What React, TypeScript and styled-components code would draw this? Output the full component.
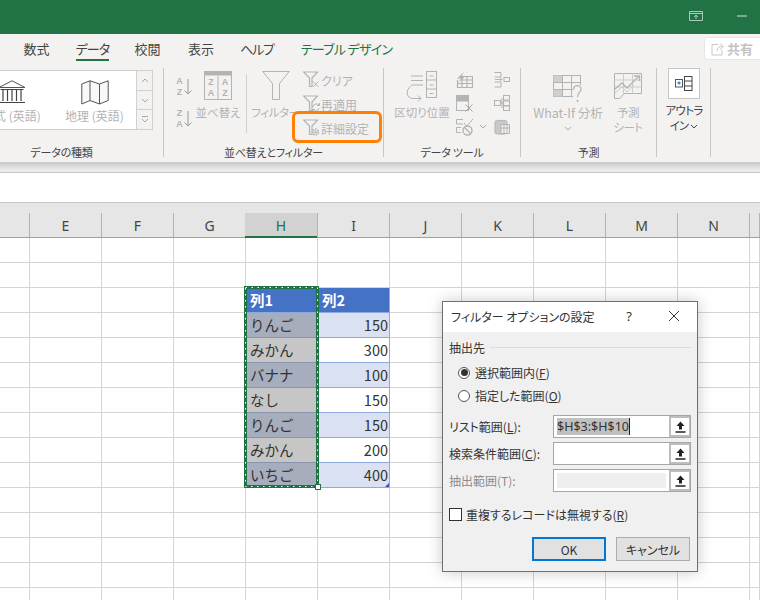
import React from 'react';
import styled, { createGlobalStyle } from 'styled-components';

const FONT = '"Noto Sans CJK JP", "Noto Sans", sans-serif';
const DIM = '#b3b3b3';

const GlobalStyle = createGlobalStyle`
  html, body { margin: 0; padding: 0; }
  body {
    width: 760px;
    height: 600px;
    overflow: hidden;
    background: #fff;
    font-family: ${FONT};
    font-feature-settings: "palt";
    color: #444;
  }
`;

const Page = styled.div`
  position: relative;
  width: 760px;
  height: 600px;
  overflow: hidden;
`;

/* title bar */
const TitleBar = styled.div`
  height: 34px;
  background: #217346;
  display: flex;
  align-items: center;
  justify-content: flex-end;
  gap: 34px;
  padding: 0 13px 2px 0;
  box-sizing: border-box;
`;

/* tabs */
const TabBar = styled.div`
  height: 34px;
  background: #f3f2f1;
  display: flex;
  padding-left: 9px;
  box-sizing: border-box;
`;

const Tab = styled.div<{ $w: number; $active?: boolean; $accent?: boolean; $tight?: number }>`
  position: relative;
  width: ${(p) => p.$w}px;
  text-align: center;
  font-size: 13px;
  line-height: 30px;
  letter-spacing: ${(p) => p.$tight ?? 0}px;
  white-space: nowrap;
  color: ${(p) => (p.$accent ? '#217346' : '#444')};
  &::after {
    content: '';
    display: ${(p) => (p.$active ? 'block' : 'none')};
    position: absolute;
    left: 12px;
    right: 12px;
    top: 25px;
    height: 2px;
    background: #217346;
  }
`;

const ShareButton = styled.div`
  margin: 3px -6px 0 auto;
  width: 62px;
  height: 23px;
  box-sizing: border-box;
  background: #fff;
  border: 1px solid #e6e6e6;
  border-radius: 3px;
  display: flex;
  align-items: center;
  padding-left: 6px;
  gap: 2px;
  font-size: 13px;
  font-weight: 700;
  color: #c4c4c4;
`;

/* ribbon */
const Ribbon = styled.div`
  height: 94px;
  background: #f3f2f1;
  display: flex;
  align-items: flex-start;
`;

const Group = styled.div<{ $w: number; $first?: boolean }>`
  flex: none;
  width: ${(p) => p.$w}px;
  height: 89px;
  box-sizing: border-box;
  border-right: 1px solid #c8c6c4;
  margin-left: ${(p) => (p.$first ? '-40px' : '0')};
`;

const GroupBody = styled.div<{ $pad?: number }>`
  height: 73px;
  display: flex;
  align-items: flex-start;
  padding-left: ${(p) => p.$pad ?? 0}px;
`;

const GroupLabel = styled.div`
  text-align: center;
  font-size: 11px;
  letter-spacing: -0.2px;
  line-height: 22px;
  height: 16px;
  color: #444;
  white-space: nowrap;
`;

const Gallery = styled.div`
  margin: 2px 10px 0 0;
  height: 60px;
  box-sizing: border-box;
  flex: 1;
  display: flex;
  justify-content: flex-end;
  background: #fff;
  border: 1px solid #d2d0ce;
`;

const GalleryItem = styled.div`
  width: 83px;
  display: flex;
  flex-direction: column;
  align-items: center;
  padding-top: 9px;
  box-sizing: border-box;
  font-size: 12px;
  line-height: 22px;
  color: ${DIM};
  white-space: nowrap;
`;

const GalleryScroll = styled.div`
  width: 15px;
  display: flex;
  flex-direction: column;
  background: #f3f2f1;
  border-left: 1px solid #d2d0ce;
`;

const ScrollStep = styled.div`
  flex: 1;
  display: flex;
  align-items: center;
  justify-content: center;
  & + & { border-top: 1px solid #d2d0ce; }
`;

const SortColumn = styled.div`
  width: 21px;
  display: flex;
  flex-direction: column;
  gap: 12px;
  padding-top: 8px;
`;

const BigButton = styled.div<{ $w: number; $gap?: number; $enabled?: boolean; $tight?: number; $size?: number }>`
  flex: none;
  width: ${(p) => p.$w}px;
  margin-left: ${(p) => p.$gap ?? 0}px;
  display: flex;
  flex-direction: column;
  align-items: center;
  font-size: ${(p) => p.$size ?? 11.5}px;
  letter-spacing: ${(p) => p.$tight ?? 0}px;
  line-height: 15px;
  text-align: center;
  white-space: nowrap;
  color: ${(p) => (p.$enabled ? '#444' : DIM)};
`;

const IconSlot = styled.div<{ $top?: number }>`
  height: 37px;
  box-sizing: border-box;
  padding-top: ${(p) => p.$top ?? 3}px;
  display: flex;
  justify-content: center;
`;

const MoreMark = styled.div`
  margin-top: 5px;
  line-height: 0;
`;

const VRule = styled.div`
  width: 1px;
  height: 59px;
  margin: 6px 0 0 6px;
  background: #d2d0ce;
`;

const SmallStack = styled.div<{ $gap: number; $w?: number }>`
  margin-left: ${(p) => p.$gap}px;
  width: ${(p) => (p.$w ? `${p.$w}px` : 'auto')};
  display: flex;
  flex-direction: column;
`;

const SmallRow = styled.div<{ $boxed?: boolean }>`
  position: relative;
  height: 24px;
  display: flex;
  align-items: center;
  font-size: 12px;
  color: ${DIM};
  white-space: nowrap;
  &::after {
    content: '';
    display: ${(p) => (p.$boxed ? 'block' : 'none')};
    position: absolute;
    left: -11px;
    top: -5px;
    width: 90px;
    height: 32px;
    box-sizing: border-box;
    border: 3px solid #ff8000;
    border-radius: 6px;
  }
`;

const IconRow = styled.div`
  height: 23.5px;
  display: flex;
  align-items: center;
  gap: 5px;
`;

const OutlineTile = styled.div`
  width: 32px;
  height: 31px;
  box-sizing: border-box;
  background: #fff;
  border: 1px solid #c8c6c4;
  display: flex;
  align-items: center;
  justify-content: center;
  margin-bottom: 4px;
`;

const Shade = styled.div`
  height: 10px;
  background: linear-gradient(#c8c8c8, #e8e8e8 70%, #ededed);
`;

/* formula bar */
const FormulaBar = styled.div`
  height: 31px;
  box-sizing: border-box;
  background: #fff;
  border-top: 1px solid #c6c6c6;
  border-bottom: 1px solid #c6c6c6;
`;

/* sheet */
const COLUMNS = '30px repeat(10, 72px) 1fr';

const HeaderRow = styled.div`
  height: 35px;
  box-sizing: border-box;
  display: grid;
  grid-template-columns: ${COLUMNS};
  background: #e6e6e6;
  border-bottom: 1px solid #9f9f9f;
  padding-top: 10px;
`;

const ColHead = styled.div<{ $selected?: boolean }>`
  display: flex;
  align-items: center;
  justify-content: center;
  font-family: "Noto Sans", sans-serif;
  font-size: 14px;
  box-sizing: border-box;
  border-right: 1px solid #b4b4b4;
  margin-left: ${(p) => (p.$selected ? '-1px' : '0')};
  color: ${(p) => (p.$selected ? '#217346' : '#444')};
  background: ${(p) => (p.$selected ? '#d2d2d2' : 'transparent')};
  box-shadow: ${(p) => (p.$selected ? 'inset 0 -2px 0 #217346' : 'none')};
  margin-bottom: ${(p) => (p.$selected ? '-1px' : '0')};
`;

const SheetBody = styled.div`
  position: relative;
`;

const SheetRow = styled.div`
  height: 25px;
  display: grid;
  grid-template-columns: ${COLUMNS};
`;

type Tone = 'plain' | 'head' | 'selA' | 'selB' | 'bandA' | 'bandB';

const TONE: Record<Tone, { bg: string; line: string }> = {
  plain: { bg: '#fff', line: '#d4d4d4' },
  head: { bg: '#4472c4', line: '#8ea9db' },
  selA: { bg: '#a6adbc', line: '#8a95ad' },
  selB: { bg: '#c6c6c6', line: '#8a95ad' },
  bandA: { bg: '#d9e1f2', line: '#8ea9db' },
  bandB: { bg: '#fff', line: '#8ea9db' },
};

const Cell = styled.div<{ $tone: Tone; $right?: boolean }>`
  box-sizing: border-box;
  height: 25px;
  line-height: 24px;
  background: ${(p) => TONE[p.$tone].bg};
  border-bottom: 1px solid ${(p) => TONE[p.$tone].line};
  border-right: 1px solid ${(p) => (p.$tone.startsWith('band') || p.$tone === 'head' ? '#8ea9db' : '#d4d4d4')};
  font-size: 14.5px;
  padding: 0 ${(p) => (p.$right ? '1px' : '0')} 0 ${(p) => (p.$right ? '0' : '4px')};
  text-align: ${(p) => (p.$right ? 'right' : 'left')};
  color: ${(p) => (p.$tone === 'head' ? '#fff' : '#333')};
  font-weight: ${(p) => (p.$tone === 'head' ? 700 : 400)};
  font-feature-settings: "palt" 0;
  letter-spacing: 0;
  white-space: nowrap;
`;

const Ants = styled.svg`
  position: absolute;
  left: 244px;
  top: 48px;
`;

const TableCorner = styled.div`
  position: absolute;
  left: 385px;
  top: 245px;
  width: 0;
  height: 0;
  border-left: 4px solid transparent;
  border-bottom: 4px solid #3f51b5;
`;

/* dialog */
const Dialog = styled.div`
  position: absolute;
  left: 442px;
  top: 301px;
  width: 256px;
  height: 271px;
  box-sizing: border-box;
  background: #f0f0f0;
  border: 1px solid #6f6f6f;
  box-shadow: 0 0 14px rgba(0, 0, 0, 0.22);
  font-size: 12px;
  color: #333;
  white-space: nowrap;
`;

const DialogTitle = styled.div`
  height: 30px;
  box-sizing: border-box;
  padding: 0 0 2px 8px;
  background: #fff;
  display: flex;
  align-items: center;
  font-size: 12px;
`;

const TitleHelp = styled.span`
  margin-left: auto;
  margin-right: 36px;
  font-family: "Noto Sans", sans-serif;
  font-size: 13px;
`;

const TitleClose = styled.svg`
  margin-right: 17px;
`;

const DialogBody = styled.div`
  padding: 6px 6px 0;
  display: flex;
  flex-direction: column;
`;

const SectionHead = styled.div`
  height: 18px;
  display: flex;
  align-items: center;
  gap: 5px;
  &::after {
    content: '';
    flex: 1;
    height: 1px;
    background: #dcdcdc;
  }
`;

const RadioList = styled.div`
  margin-top: 5px;
  padding-left: 9px;
`;

const RadioRow = styled.div`
  height: 23px;
  display: flex;
  align-items: center;
  gap: 5px;
`;

const RadioMark = styled.span<{ $on?: boolean }>`
  width: 12px;
  height: 12px;
  box-sizing: border-box;
  border: 1px solid #555;
  border-radius: 50%;
  background: #fff;
  display: flex;
  align-items: center;
  justify-content: center;
  &::after {
    content: '';
    display: ${(p) => (p.$on ? 'block' : 'none')};
    width: 7px;
    height: 7px;
    border-radius: 50%;
    background: #333;
  }
`;

const FieldList = styled.div`
  margin-top: 8px;
  display: flex;
  flex-direction: column;
  gap: 4px;
`;

const FieldRow = styled.div<{ $off?: boolean }>`
  height: 23px;
  display: flex;
  align-items: center;
  color: ${(p) => (p.$off ? '#8c8c8c' : '#333')};
`;

const FieldLabel = styled.div`
  width: 104px;
`;

const RangeBox = styled.div`
  width: 138px;
  height: 23px;
  box-sizing: border-box;
  border: 1px solid #a6a6a6;
  background: #fff;
  display: flex;
`;

const RangeText = styled.div<{ $off?: boolean }>`
  flex: 1;
  margin: 3px;
  display: flex;
  align-items: center;
  background: ${(p) => (p.$off ? '#efefef' : 'transparent')};
  font-family: "Noto Sans", sans-serif;
  font-size: 12.5px;
  color: #333;
`;

const Selected = styled.span`
  background: #c0c0c0;
  line-height: 17px;
  border-right: 1px solid #222;
`;

const RangeButton = styled.div`
  width: 21px;
  box-sizing: border-box;
  border: 2px solid #bdbdbd;
  border-right-width: 1px;
  background: #fff;
  display: flex;
  align-items: center;
  justify-content: center;
`;

const CheckRow = styled.div`
  margin-top: 16px;
  height: 13px;
  display: flex;
  align-items: center;
  gap: 4px;
`;

const CheckMark = styled.span`
  width: 13px;
  height: 13px;
  box-sizing: border-box;
  background: #fff;
  border: 1px solid #333;
`;

const ButtonRow = styled.div`
  margin-top: 16px;
  padding-right: 1px;
  display: flex;
  justify-content: flex-end;
  gap: 10px;
`;

const DialogButton = styled.button<{ $primary?: boolean }>`
  width: 74px;
  height: 24px;
  padding: 0;
  box-sizing: border-box;
  background: #e1e1e1;
  border: ${(p) => (p.$primary ? '2px solid #0078d7' : '1px solid #adadad')};
  font-family: ${FONT};
  font-feature-settings: "palt";
  font-size: 12px;
  color: #333;
`;

/* icons */
const stroke = { fill: 'none', stroke: DIM, strokeWidth: 1 } as const;
const Letter: React.FC<{ x: number; y: number; size?: number; children: string }> = ({ x, y, size = 9, children }) => (
  <text x={x} y={y} fontSize={size} fontFamily="Liberation Sans, sans-serif" fontWeight={700} fill={DIM} textAnchor="middle">
    {children}
  </text>
);

const SortIcon: React.FC<{ top: string; bottom: string }> = ({ top, bottom }) => (
  <svg width="18" height="20" viewBox="0 0 18 20">
    <Letter x={4.5} y={8}>{top}</Letter>
    <Letter x={4.5} y={18.500}>{bottom}</Letter>
    <path d="M13 3V18M9.5 14.5L13 18L16.5 14.5" {...stroke} stroke="#999" />
  </svg>
);

const SortBigIcon = () => (
  <svg width="28" height="29" viewBox="0 0 28 29">
    <rect x="0.5" y="0.5" width="27" height="28" {...stroke} />
    <rect x="0.5" y="0.5" width="27" height="4" fill={DIM} />
    <path d="M14 5V28" {...stroke} />
    <Letter x={7} y={14}>Z</Letter>
    <Letter x={7} y={25}>A</Letter>
    <Letter x={21} y={14}>A</Letter>
    <Letter x={21} y={25}>Z</Letter>
  </svg>
);

const FunnelBig = () => (
  <svg width="28" height="29" viewBox="0 0 28 29">
    <path d="M0.8 0.5H27.2L17.5 12.5V28.5H10.5V12.5Z" fill="#f3f2f1" stroke={DIM} />
  </svg>
);

const FunnelSmall: React.FC<{ mark: 'x' | 'redo' | 'gear' }> = ({ mark }) => (
  <svg width="18" height="18" viewBox="0 0 18 18">
    <path d="M0.5 1H14.5L9 7V15.5H6.5V7Z" fill="none" stroke={DIM} strokeWidth="1.2" />
    {mark === 'x' && <path d="M10 10.5L15.5 16M15.5 10.5L10 16" {...stroke} />}
    {mark === 'redo' && <path d="M10 12a3.5 3.5 0 0 1 6-2M16.5 8V10.5H14M16 13a3.5 3.5 0 0 1-6 2M9.500 17V14.500H12" {...stroke} />}
    {mark === 'gear' && (
      <g {...stroke}>
        <circle cx="12.5" cy="13" r="2.800" strokeWidth="1.800" strokeDasharray="1.500 1" />
        <circle cx="12.5" cy="13" r="1" />
      </g>
    )}
  </svg>
);

const TextColumnsIcon = () => (
  <svg width="32" height="31" viewBox="0 0 32 31">
    <path d="M5 5H17M5 9.500H17M5 14H17" {...stroke} />
    <rect x="20.500" y="0.500" width="10" height="26" {...stroke} />
    <path d="M20.500 9H30.500M20.500 18H30.500M23.500 5H27.500M23.500 14H27.500M23.500 22.500H27.500" {...stroke} />
    <path d="M5 15C-1 19 0 28 8 27.500H15M12 24.500L15 27.500L12 30.500" {...stroke} />
  </svg>
);

const FlashFillIcon = () => (
  <svg width="17" height="16" viewBox="0 0 17 16">
    <path d="M4.500 4.500H16.500V15.500H1.500V8M1.500 11.500H16.500M6 4.500V15.500M11 4.500V15.500M4.500 8H16.500" {...stroke} strokeWidth="1.200" />
    <path d="M8 0L1 6.500H5L2 11L9 4.500H5.500Z" fill={DIM} />
  </svg>
);

const DuplicatesIcon = () => (
  <svg width="18" height="17" viewBox="0 0 18 17">
    <rect x="0.500" y="0.500" width="12" height="15" {...stroke} />
    <rect x="0.500" y="0.500" width="12" height="6" fill={DIM} />
    <path d="M9.500 9.500L16.500 16.500M16.500 9.500L9.500 16.500" fill="none" stroke="#a5a5a5" />
  </svg>
);

const ValidationIcon = () => (
  <svg width="18" height="18" viewBox="0 0 18 18">
    <path d="M0.500 1.500H7M0.500 1.500V6H7M0.500 9.500H5M0.500 9.500V14.500H5" {...stroke} />
    <path d="M8 5L11 8L17 1" {...stroke} />
    <circle cx="11.500" cy="12.500" r="4.500" {...stroke} strokeWidth="1.400" />
    <path d="M8.500 9.500L14.500 15.500" {...stroke} strokeWidth="1.400" />
  </svg>
);

const ConsolidateIcon = () => (
  <svg width="16" height="16" viewBox="0 0 16 16">
    <path d="M0.500 0.500H7V5H0.500M0.500 10H7V15H0.500" {...stroke} />
    <rect x="10" y="5.500" width="5.500" height="4" {...stroke} />
    <path d="M1 7.500H8M6 5.500L8 7.500L6 9.500" {...stroke} />
  </svg>
);

const RelationsIcon = () => (
  <svg width="16" height="16" viewBox="0 0 16 16">
    <rect x="0.500" y="5.500" width="6" height="5" {...stroke} />
    <rect x="9.500" y="0.500" width="6" height="4.500" {...stroke} />
    <rect x="9.500" y="6" width="6" height="4.500" {...stroke} />
    <rect x="9.500" y="11" width="6" height="4.500" {...stroke} />
    <path d="M6.500 8H9.500M8 3V13" {...stroke} />
  </svg>
);

const DataModelIcon = () => (
  <svg width="16" height="16" viewBox="0 0 16 16">
    <path d="M1 2.500C1 1 13 1 13 2.500V14C13 15.500 1 15.500 1 14Z" fill="#c9c9c9" stroke={DIM} />
    <path d="M7 5.500H15.500V14.500H7ZM7 9H15.500M10 5.500V14.500M13 5.500V14.500" fill="#f3f2f1" stroke={DIM} />
  </svg>
);

const WhatIfIcon = () => (
  <svg width="30" height="28" viewBox="0 0 30 28">
    <rect x="0.500" y="0.500" width="27" height="21" fill="none" stroke={DIM} />
    <rect x="0.500" y="0.500" width="9" height="7" fill="#cfcfcf" />
    <rect x="0.500" y="14.500" width="9" height="7" fill="#cfcfcf" />
    <path d="M0.500 7.500H27.500M0.500 14.500H27.500M9.500 0.500V21.500M18.500 0.500V21.500" {...stroke} />
    <rect x="20" y="10" width="10" height="18" fill="#f3f2f1" />
    <path d="M20.500 14.500C20.500 9 28.500 9.500 28 14.500C27.700 17.500 24.500 17.500 24.500 22" {...stroke} strokeWidth="1.300" />
    <circle cx="24.500" cy="26" r="1.100" fill={DIM} />
  </svg>
);

const ForecastIcon = () => (
  <svg width="28" height="26" viewBox="0 0 28 26">
    <path d="M0.500 0.500H27.500V20.500H10L6 25.500H0.500Z" {...stroke} />
    <path d="M0.500 7H27.500M0.500 14H27.500M9.500 0.500V20.500M18.500 0.500V20.500" stroke="#cdcdcd" fill="none" />
    <path d="M1 16L8 10L13 15L25 3M20 3H25.500V8" fill="none" stroke={DIM} strokeWidth="1.300" />
    <path d="M1 20L8 14L13 19L20 12" fill="none" stroke="#cdcdcd" />
  </svg>
);

const OutlineIcon = () => (
  <svg width="18" height="15" viewBox="0 0 18 15">
    <rect x="0.500" y="3.500" width="7" height="7.500" fill="none" stroke="#555" />
    <path d="M2.500 7H5.500M4 5.500V8.500" fill="none" stroke="#0e8acb" strokeWidth="1.300" />
    <rect x="9.500" y="0.500" width="7.500" height="14" fill="none" stroke="#444" />
    <path d="M9.500 5H17M9.500 10H17" fill="none" stroke="#444" />
  </svg>
);

const BankIcon = () => (
  <svg width="28" height="25" viewBox="0 0 28 25">
    <path d="M14 0.800L27 7.500H1Z" fill="none" stroke="#555" />
    <path d="M2.500 9.500H25.500M5 10V21M9.500 10V21M14 10V21M18.500 10V21M23 10V21M1 22.500H27" fill="none" stroke="#444" strokeWidth="1.200" />
  </svg>
);

const MapIcon = () => (
  <svg width="28" height="25" viewBox="0 0 28 25">
    <path d="M0.800 4L9 0.800L18.500 4L27.200 0.800V20.500L18.500 24L9 20.500L0.800 24Z" fill="#f9f9f9" stroke="#555" />
    <path d="M9 0.800V20.500M18.500 4V24" fill="none" stroke="#555" />
  </svg>
);

const Chevron: React.FC<{ up?: boolean; color?: string; bar?: boolean }> = ({ up, color = '#a8a8a8', bar }) => (
  <svg width="8" height="7" viewBox="0 0 8 7">
    {bar && <path d="M1 0.500H7" fill="none" stroke={color} />}
    <path d={up ? 'M1 5L4 2L7 5' : bar ? 'M1 3L4 6L7 3' : 'M1 2L4 5L7 2'} fill="none" stroke={color} />
  </svg>
);

const UploadArrow = () => (
  <svg width="11" height="12" viewBox="0 0 11 12">
    <path d="M5.500 0.500L9.500 5H7V8.500H4V5H1.500Z" fill="#222" />
    <path d="M0.500 11H10.500" fill="none" stroke="#222" strokeWidth="1.500" />
  </svg>
);

/* data */
const LETTERS = ['', 'E', 'F', 'G', 'H', 'I', 'J', 'K', 'L', 'M', 'N', ''];

const TABLE: [string, string][] = [
  ['列1', '列2'],
  ['りんご', '150'],
  ['みかん', '300'],
  ['バナナ', '100'],
  ['なし', '150'],
  ['りんご', '150'],
  ['みかん', '200'],
  ['いちご', '400'],
];

const FIRST_TABLE_ROW = 2;
const ROWS = 15;
const H_COLUMN = 4;

const renderRow = (row: number) =>
  LETTERS.map((_, col) => {
    const index = row - FIRST_TABLE_ROW;
    const inTable = index >= 0 && index < TABLE.length;
    if (inTable && (col === H_COLUMN || col === H_COLUMN + 1)) {
      const isHead = index === 0;
      const odd = index % 2 === 1;
      if (col === H_COLUMN) {
        return <Cell key={col} $tone={isHead ? 'head' : odd ? 'selA' : 'selB'}>{TABLE[index][0]}</Cell>;
      }
      return (
        <Cell key={col} $tone={isHead ? 'head' : odd ? 'bandA' : 'bandB'} $right={!isHead}>
          {TABLE[index][1]}
        </Cell>
      );
    }
    return <Cell key={col} $tone="plain" />;
  });

export default function App() {
  return (
    <Page>
      <GlobalStyle />
      <TitleBar>
        <svg width="14" height="10" viewBox="0 0 14 10">
          <path d="M0.500 0.500H13.500V9.500H0.500ZM0.500 2.500H13.500M7 8V4M5 6L7 4L9 6" fill="none" stroke="#a9cdb9" />
        </svg>
        <svg width="10" height="2" viewBox="0 0 10 2">
          <path d="M0 1H10" stroke="#cfe3d8" />
        </svg>
      </TitleBar>

      <TabBar>
        <Tab $w={55}>数式</Tab>
        <Tab $w={57} $active $tight={-0.8}>データ</Tab>
        <Tab $w={53}>校閲</Tab>
        <Tab $w={54}>表示</Tab>
        <Tab $w={58} $tight={-1.2}>ヘルプ</Tab>
        <Tab $w={121} $accent $tight={-0.7}>テーブル デザイン</Tab>
        <ShareButton>
          <svg width="14" height="14" viewBox="0 0 14 14">
            <path d="M7 2.500H1V13H11V8M6 9C6 6 8 4.500 11 4.500M9 1.500L12.500 4.500L9 7.500" fill="none" stroke="#c9c9c9" />
          </svg>
          共有
        </ShareButton>
      </TabBar>

      <Ribbon>
        <Group $w={204} $first>
          <GroupBody>
            <Gallery>
              <GalleryItem>
                <BankIcon />
                株式 (英語)
              </GalleryItem>
              <GalleryItem>
                <MapIcon />
                地理 (英語)
              </GalleryItem>
              <GalleryScroll>
                <ScrollStep><Chevron up /></ScrollStep>
                <ScrollStep><Chevron /></ScrollStep>
                <ScrollStep><Chevron bar /></ScrollStep>
              </GalleryScroll>
            </Gallery>
          </GroupBody>
          <GroupLabel>データの種類</GroupLabel>
        </Group>

        <Group $w={220}>
          <GroupBody $pad={11}>
            <SortColumn>
              <SortIcon top="A" bottom="Z" />
              <SortIcon top="Z" bottom="A" />
            </SortColumn>
            <BigButton $w={44}>
              <IconSlot><SortBigIcon /></IconSlot>
              並べ替え
            </BigButton>
            <VRule />
            <BigButton $w={45} $gap={6} $tight={-0.4}>
              <IconSlot><FunnelBig /></IconSlot>
              フィルター
            </BigButton>
            <SmallStack $gap={5}>
              <SmallRow><FunnelSmall mark="x" />クリア</SmallRow>
              <SmallRow><FunnelSmall mark="redo" />再適用</SmallRow>
              <SmallRow $boxed><FunnelSmall mark="gear" />詳細設定</SmallRow>
            </SmallStack>
          </GroupBody>
          <GroupLabel>並べ替えとフィルター</GroupLabel>
        </Group>

        <Group $w={137}>
          <GroupBody $pad={10}>
            <BigButton $w={56}>
              <IconSlot><TextColumnsIcon /></IconSlot>
              区切り位置
            </BigButton>
            <SmallStack $gap={6} $w={38}>
              <IconRow><FlashFillIcon /></IconRow>
              <IconRow><DuplicatesIcon /></IconRow>
              <IconRow><ValidationIcon /><Chevron /></IconRow>
            </SmallStack>
            <SmallStack $gap={0}>
              <IconRow><ConsolidateIcon /></IconRow>
              <IconRow><RelationsIcon /></IconRow>
              <IconRow><DataModelIcon /></IconRow>
            </SmallStack>
          </GroupBody>
          <GroupLabel>データ ツール</GroupLabel>
        </Group>

        <Group $w={136}>
          <GroupBody $pad={10}>
            <BigButton $w={74} $size={12.500}>
              <IconSlot $top={7}><WhatIfIcon /></IconSlot>
              What-If 分析
              <MoreMark><Chevron /></MoreMark>
            </BigButton>
            <BigButton $w={32} $gap={7} $tight={-0.5}>
              <IconSlot $top={5}><ForecastIcon /></IconSlot>
              予測
              <br />
              シート
            </BigButton>
          </GroupBody>
          <GroupLabel>予測</GroupLabel>
        </Group>

        <Group $w={54}>
          <GroupBody $pad={10}>
            <BigButton $w={34} $enabled $tight={-0.7}>
              <OutlineTile><OutlineIcon /></OutlineTile>
              アウトラ
              <span>イン <Chevron color="#444" /></span>
            </BigButton>
          </GroupBody>
        </Group>
      </Ribbon>

      <Shade />
      <FormulaBar />

      <HeaderRow>
        {LETTERS.map((letter, i) => (
          <ColHead key={i} $selected={i === H_COLUMN}>{letter}</ColHead>
        ))}
      </HeaderRow>

      <SheetBody>
        {Array.from({ length: ROWS }, (_, row) => (
          <SheetRow key={row}>{renderRow(row)}</SheetRow>
        ))}
        <TableCorner />
        <Ants width="78" height="206" viewBox="0 0 78 206">
          <rect x="1.500" y="1.500" width="72" height="199" fill="none" stroke="#217346" strokeWidth="3" />
          <rect x="1.500" y="1.500" width="72" height="199" fill="none" stroke="#fff" strokeWidth="1" strokeDasharray="1.500 4.500" />
          <rect x="71.500" y="198.500" width="5" height="5" fill="#fff" stroke="#217346" />
        </Ants>
      </SheetBody>

      <Dialog>
        <DialogTitle>
          フィルター オプションの設定
          <TitleHelp>?</TitleHelp>
          <TitleClose width="12" height="12" viewBox="0 0 12 12">
            <path d="M1 1L11 11M11 1L1 11" fill="none" stroke="#333" />
          </TitleClose>
        </DialogTitle>
        <DialogBody>
          <SectionHead>抽出先</SectionHead>
          <RadioList>
            <RadioRow><RadioMark $on /><span>選択範囲内(<u>F</u>)</span></RadioRow>
            <RadioRow><RadioMark /><span>指定した範囲(<u>O</u>)</span></RadioRow>
          </RadioList>
          <FieldList>
            <FieldRow>
              <FieldLabel>リスト範囲(<u>L</u>):</FieldLabel>
              <RangeBox>
                <RangeText><Selected>$H$3:$H$10</Selected></RangeText>
                <RangeButton><UploadArrow /></RangeButton>
              </RangeBox>
            </FieldRow>
            <FieldRow>
              <FieldLabel>検索条件範囲(<u>C</u>):</FieldLabel>
              <RangeBox>
                <RangeText />
                <RangeButton><UploadArrow /></RangeButton>
              </RangeBox>
            </FieldRow>
            <FieldRow $off>
              <FieldLabel>抽出範囲(T):</FieldLabel>
              <RangeBox>
                <RangeText $off />
                <RangeButton><UploadArrow /></RangeButton>
              </RangeBox>
            </FieldRow>
          </FieldList>
          <CheckRow><CheckMark /><span>重複するレコードは無視する(<u>R</u>)</span></CheckRow>
          <ButtonRow>
            <DialogButton $primary>OK</DialogButton>
            <DialogButton>キャンセル</DialogButton>
          </ButtonRow>
        </DialogBody>
      </Dialog>
    </Page>
  );
}
